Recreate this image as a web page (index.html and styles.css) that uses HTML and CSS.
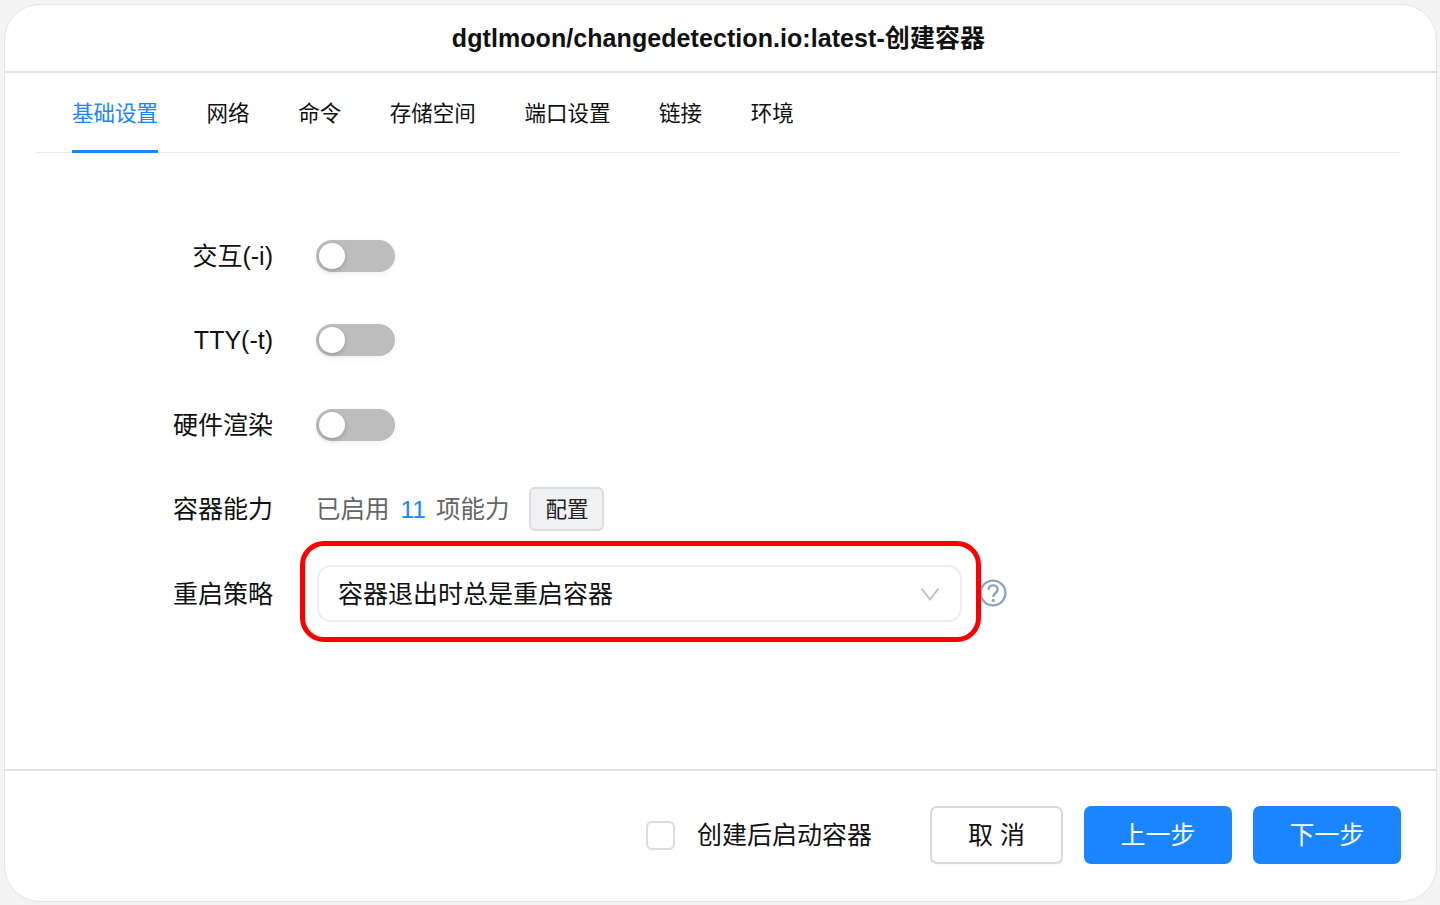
FILE: index.html
```html
<!DOCTYPE html>
<html lang="zh-CN">
<head>
	<meta charset="UTF-8">
	<meta name="viewport" content="width=device-width, initial-scale=1.0">
	<title>创建容器</title>
	<link rel="stylesheet" href="styles.css">
</head>
<body>
	<div class="dialog">
		<header class="dialog-title">dgtlmoon/changedetection.io:latest-创建容器</header>
		<nav class="tabs">
			<a class="tab active">基础设置</a>
			<a class="tab">网络</a>
			<a class="tab">命令</a>
			<a class="tab">存储空间</a>
			<a class="tab">端口设置</a>
			<a class="tab">链接</a>
			<a class="tab">环境</a>
		</nav>
		<main class="form">
			<div class="row">
				<label class="row-label">交互(-i)</label>
				<span class="toggle"><span class="knob"></span></span>
			</div>
			<div class="row">
				<label class="row-label latin">TTY(-t)</label>
				<span class="toggle"><span class="knob"></span></span>
			</div>
			<div class="row">
				<label class="row-label">硬件渲染</label>
				<span class="toggle"><span class="knob"></span></span>
			</div>
			<div class="row">
				<label class="row-label">容器能力</label>
				<span class="caps">已启用<b class="caps-count">11</b>项能力</span>
				<button class="config-btn">配置</button>
			</div>
			<div class="row">
				<label class="row-label">重启策略</label>
				<div class="select-wrap">
					<div class="select">
						<span class="select-value">容器退出时总是重启容器</span>
						<svg class="chevron" width="20" height="14" viewBox="0 0 20 14"><path d="M1.5 1.5 L10 12.5 L18.5 1.5" fill="none" stroke="#bdbdbd" stroke-width="1.8"/></svg>
					</div>
					<div class="highlight"></div>
				</div>
				<svg class="help" width="28" height="28" viewBox="0 0 28 28">
					<circle cx="14" cy="14" r="12.4" fill="none" stroke="#8aa5c2" stroke-width="2.4"/>
					<path d="M9.6 10.8 C9.6 4.8 18.6 5 18.6 10.6 C18.6 14 14.2 14 14.2 18" fill="none" stroke="#8aa5c2" stroke-width="2.4"/>
					<circle cx="14.2" cy="21.4" r="1.6" fill="#8aa5c2"/>
				</svg>
			</div>
		</main>
		<footer class="footer">
			<span class="checkbox"></span>
			<span class="check-label">创建后启动容器</span>
			<button class="btn cancel">取 消</button>
			<button class="btn primary">上一步</button>
			<button class="btn primary">下一步</button>
		</footer>
	</div>
</body>
</html>
```

FILE: styles.css
```css
* {
	box-sizing: border-box;
}
body {
	margin: 0;
	background: #f4f4f4;
	font-family: "Liberation Sans", "Noto Sans CJK SC", sans-serif;
	color: #111;
}
.dialog {
	display: flex;
	flex-direction: column;
	width: 1433px;
	height: 898px;
	margin: 4px 0 0 4px;
	background: #fff;
	border: 1px solid #e4e4e4;
	border-radius: 36px;
	overflow: hidden;
}

/* Title bar */
.dialog-title {
	height: 68px;
	flex: none;
	border-bottom: 2px solid #e2e2e2;
	text-align: center;
	font-size: 25px;
	font-weight: bold;
	letter-spacing: 0.07px;
	line-height: 66px;
	padding-right: 4px;
}

/* Tabs */
.tabs {
	display: flex;
	flex: none;
	gap: 48.6px;
	height: 80px;
	margin: 0 36px 0 31px;
	padding-left: 36px;
	border-bottom: 1px solid #e8e8e8;
}
.tab {
	height: 80px;
	padding-top: 25px;
	font-size: 21.5px;
	line-height: 32px;
}
.tab.active {
	color: #1a85ff;
	border-bottom: 3px solid #1a85ff;
}

/* Form rows */
.form {
	flex: 1;
	display: flex;
	flex-direction: column;
	gap: 26.4px;
	padding-top: 74px;
}
.row {
	display: flex;
	align-items: center;
	height: 58px;
	padding-left: 311px;
	position: relative;
}
.row-label {
	position: absolute;
	right: 1163px;
	padding-bottom: 4px;
	font-size: 25px;
	white-space: nowrap;
}
.row-label.latin {
	padding-bottom: 0;
}
.toggle {
	display: block;
	position: relative;
	width: 79px;
	height: 32px;
	border-radius: 16px;
	background: #bdbdbd;
	box-shadow: 0 2px 6px rgba(0, 0, 0, 0.06);
}
.knob {
	position: absolute;
	left: 3px;
	top: 3px;
	width: 26px;
	height: 26px;
	border-radius: 50%;
	background: #fff;
	box-shadow: 0 2px 5px rgba(0, 0, 0, 0.18);
}
.caps {
	padding-bottom: 4px;
	font-size: 24.5px;
	color: #666;
}
.caps-count {
	font-weight: normal;
	color: #1a85ff;
	margin: 0 10px 0 11px;
}
.config-btn {
	width: 75px;
	height: 44px;
	margin-left: 20px;
	padding: 0 0 4px;
	background: #f0f1f3;
	border: 2px solid #dcdcdc;
	border-radius: 6px;
	font: inherit;
	font-size: 21.5px;
	color: #222;
}

/* Restart policy select */
.select-wrap {
	position: relative;
	width: 645px;
	margin-left: 1px;
}
.select {
	display: flex;
	align-items: center;
	justify-content: space-between;
	height: 57px;
	padding: 0 20px 0 19px;
	border: 2px solid #eeeeee;
	border-radius: 14px;
	font-size: 25px;
}
.select-value {
	padding-bottom: 4px;
}
.highlight {
	position: absolute;
	left: -17px;
	right: -19px;
	top: -24px;
	bottom: -20px;
	border: 5px solid #ff0000;
	border-radius: 24px;
}
.help {
	margin-left: 17px;
	margin-top: -2px;
}

/* Footer */
.footer {
	display: flex;
	align-items: center;
	flex: none;
	height: 132px;
	padding: 0 35px 2px 641px;
	border-top: 2px solid #e2e2e2;
}
.checkbox {
	width: 29px;
	height: 29px;
	border: 2px solid #dcdcdc;
	border-radius: 6px;
}
.check-label {
	margin-left: 22px;
	padding-bottom: 4px;
	font-size: 25px;
}
.btn {
	height: 58px;
	padding: 0 0 4px;
	border-radius: 7px;
	font: inherit;
	font-size: 25px;
}
.cancel {
	width: 133px;
	margin-left: 58px;
	background: #fff;
	border: 2px solid #d9d9d9;
	color: #111;
	box-shadow: 0 2px 0 rgba(0, 0, 0, 0.02);
}
.primary {
	width: 148px;
	margin-left: 21px;
	background: #1a85ff;
	border: none;
	color: #fff;
}
```
